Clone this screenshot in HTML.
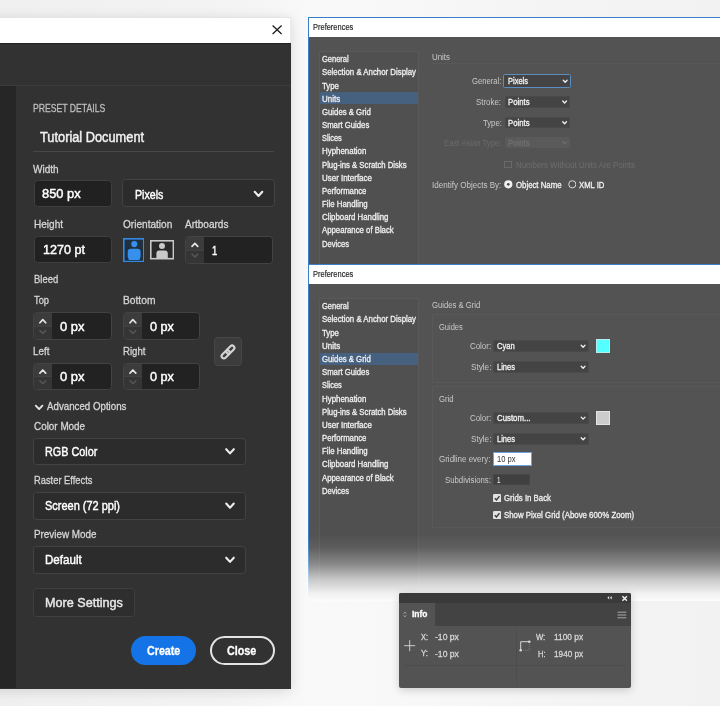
<!DOCTYPE html>
<html><head><meta charset="utf-8"><title>ui</title>
<style>
html,body{margin:0;padding:0}
body{width:720px;height:706px;overflow:hidden;position:relative;background:linear-gradient(90deg,#f0f0f0 0%,#f3f3f3 30%,#f9f9f9 44%,#f8f8f8 55%,#f3f3f3 85%,#f2f2f2 100%);font-family:"Liberation Sans",sans-serif;}
#w{position:absolute;left:0;top:0;width:720px;height:706px;will-change:transform}
.b{position:absolute;box-sizing:border-box;display:block}
.t{position:absolute;white-space:nowrap;line-height:1;transform-origin:0 50%;display:block}
</style></head><body><div id="w">
<div class="b" style="left:-20.0px;top:17.0px;width:311.3px;height:671.5px;background:#323232;box-shadow:0 2px 12px rgba(0,0,0,.13);"></div>
<div class="b" style="left:-20.0px;top:17.0px;width:311.3px;height:26.2px;background:#fff;border-top:1px solid #e4e4e4;border-right:1px solid #ececec;"></div>
<div class="b" style="left:-20.0px;top:43.2px;width:311.3px;height:1.2px;background:#232323;"></div>
<div class="b" style="left:-20.0px;top:85.6px;width:35.8px;height:602.9px;background:#262626;"></div>
<div class="b" style="left:-20.0px;top:84.5px;width:311.3px;height:1.2px;background:#3c3c3c;"></div>
<svg class="b" style="left:270.0px;top:23.0px" width="14" height="14" viewBox="0 0 14 14"><path d="M2.6 2.5 L11.6 11 M11.6 2.5 L2.6 11" stroke="#1a1a1a" stroke-width="1.25" fill="none"/></svg>
<span class="t" style="left:33.4px;top:103.0px;font-size:11px;color:#bebebe;transform:scaleX(0.786);-webkit-text-stroke:0.3px #bebebe;">PRESET DETAILS</span>
<span class="t" style="left:40.4px;top:130.4px;font-size:14px;color:#f2f2f2;transform:scaleX(0.914);-webkit-text-stroke:0.44999999999999996px #f2f2f2;">Tutorial Document</span>
<div class="b" style="left:33.4px;top:151.2px;width:240.6px;height:1.0px;background:#474747;"></div>
<span class="t" style="left:33.4px;top:163.6px;font-size:11px;color:#d6d6d6;transform:scaleX(0.910);-webkit-text-stroke:0.3px #d6d6d6;">Width</span>
<div class="b" style="left:33.8px;top:179.8px;width:78.2px;height:27.6px;background:#212121;border:1.3px solid #3f3f3f;border-radius:3.5px;"></div>
<span class="t" style="left:42.0px;top:187.3px;font-size:13px;color:#fff;transform:scaleX(0.991);-webkit-text-stroke:0.44999999999999996px #fff;">850 px</span>
<div class="b" style="left:122.2px;top:179.4px;width:152.8px;height:28.0px;background:#2c2c2c;border:1.3px solid #434343;border-radius:3.5px;"></div>
<span class="t" style="left:134.7px;top:187.8px;font-size:13px;color:#fff;transform:scaleX(0.816);-webkit-text-stroke:0.44999999999999996px #fff;">Pixels</span>
<svg class="b" style="left:0;top:0" width="720" height="706"><path d="M254.7 191.8 L258.5 196.0 L262.3 191.8" stroke="#ececec" stroke-width="2.1" fill="none" stroke-linecap="round" stroke-linejoin="round"/></svg>
<span class="t" style="left:33.6px;top:219.1px;font-size:11px;color:#d6d6d6;transform:scaleX(0.912);-webkit-text-stroke:0.3px #d6d6d6;">Height</span>
<span class="t" style="left:122.7px;top:219.1px;font-size:11px;color:#d6d6d6;transform:scaleX(0.916);-webkit-text-stroke:0.3px #d6d6d6;">Orientation</span>
<span class="t" style="left:185.2px;top:219.1px;font-size:11px;color:#d6d6d6;transform:scaleX(0.910);-webkit-text-stroke:0.3px #d6d6d6;">Artboards</span>
<div class="b" style="left:33.8px;top:235.8px;width:78.2px;height:27.7px;background:#212121;border:1.3px solid #3f3f3f;border-radius:3.5px;"></div>
<span class="t" style="left:43.3px;top:243.0px;font-size:13px;color:#fff;transform:scaleX(0.968);-webkit-text-stroke:0.44999999999999996px #fff;">1270 pt</span>
<svg class="b" style="left:122.6px;top:237.6px" width="21.6" height="24.4" viewBox="0 0 21.6 24.4"><rect x="0.8" y="0.8" width="20" height="22.8" fill="#20303f" stroke="#3489e6" stroke-width="1.6"/><circle cx="11.3" cy="6.1" r="3.1" fill="#3590ee"/><path d="M5.9 21.9 L4.7 18.5 V14 Q4.7 10.8 7.9 10.8 H14.4 Q17.6 10.8 17.6 14 V18.5 L16.4 21.9 Z" fill="#3590ee"/></svg>
<svg class="b" style="left:150.0px;top:240.2px" width="24.2" height="19.5" viewBox="0 0 24.2 19.5"><rect x="0.8" y="0.8" width="22.6" height="17.9" fill="#2a2a2a" stroke="#c9c9c9" stroke-width="1.6"/><circle cx="12" cy="5.9" r="3" fill="#cacaca"/><path d="M6.4 18.2 V13.4 Q6.4 10.5 9.3 10.5 H14.9 Q17.8 10.5 17.8 13.4 V18.2 Z" fill="#cacaca"/></svg>
<div class="b" style="left:185.3px;top:236.3px;width:88.2px;height:27.3px;background:#222;border:1.2px solid #434343;border-radius:3.5px;"></div>
<div class="b" style="left:186.3px;top:237.3px;width:17.5px;height:25.3px;background:linear-gradient(#3c3c3c 0,#3c3c3c 49%,#424242 49%,#424242 52%,#353535 52%);border-radius:2px 0 0 2px;"></div>
<svg class="b" style="left:0;top:0" width="720" height="706"><path d="M192.0 246.4 L194.9 243.3 L197.8 246.4" stroke="#e4e4e4" stroke-width="1.7" fill="none" stroke-linecap="round" stroke-linejoin="round"/></svg>
<svg class="b" style="left:0;top:0" width="720" height="706"><path d="M192.0 254.1 L194.9 257.0 L197.8 254.1" stroke="#555" stroke-width="1.6" fill="none" stroke-linecap="round" stroke-linejoin="round"/></svg>
<span class="t" style="left:212.3px;top:243.6px;font-size:13px;color:#fff;transform:scaleX(0.719);-webkit-text-stroke:0.44999999999999996px #fff;">1</span>
<span class="t" style="left:34.0px;top:273.7px;font-size:11px;color:#d6d6d6;transform:scaleX(0.860);-webkit-text-stroke:0.3px #d6d6d6;">Bleed</span>
<span class="t" style="left:33.6px;top:295.3px;font-size:11px;color:#d6d6d6;transform:scaleX(0.846);-webkit-text-stroke:0.3px #d6d6d6;">Top</span>
<span class="t" style="left:123.0px;top:295.3px;font-size:11px;color:#d6d6d6;transform:scaleX(0.930);-webkit-text-stroke:0.3px #d6d6d6;">Bottom</span>
<div class="b" style="left:33.3px;top:312.3px;width:78.5px;height:28.0px;background:#222;border:1.2px solid #434343;border-radius:3.5px;"></div>
<div class="b" style="left:34.3px;top:313.3px;width:17.5px;height:26.0px;background:linear-gradient(#3c3c3c 0,#3c3c3c 49%,#424242 49%,#424242 52%,#353535 52%);border-radius:2px 0 0 2px;"></div>
<svg class="b" style="left:0;top:0" width="720" height="706"><path d="M39.9 322.8 L42.8 319.6 L45.7 322.8" stroke="#e4e4e4" stroke-width="1.7" fill="none" stroke-linecap="round" stroke-linejoin="round"/></svg>
<svg class="b" style="left:0;top:0" width="720" height="706"><path d="M39.9 330.5 L42.8 333.4 L45.7 330.5" stroke="#555" stroke-width="1.6" fill="none" stroke-linecap="round" stroke-linejoin="round"/></svg>
<span class="t" style="left:60.0px;top:320.0px;font-size:13px;color:#fff;transform:scaleX(0.997);-webkit-text-stroke:0.44999999999999996px #fff;">0 px</span>
<div class="b" style="left:123.3px;top:312.3px;width:77.2px;height:28.0px;background:#222;border:1.2px solid #434343;border-radius:3.5px;"></div>
<div class="b" style="left:124.3px;top:313.3px;width:17.5px;height:26.0px;background:linear-gradient(#3c3c3c 0,#3c3c3c 49%,#424242 49%,#424242 52%,#353535 52%);border-radius:2px 0 0 2px;"></div>
<svg class="b" style="left:0;top:0" width="720" height="706"><path d="M130.0 322.8 L132.9 319.6 L135.8 322.8" stroke="#e4e4e4" stroke-width="1.7" fill="none" stroke-linecap="round" stroke-linejoin="round"/></svg>
<svg class="b" style="left:0;top:0" width="720" height="706"><path d="M130.0 330.5 L132.9 333.4 L135.8 330.5" stroke="#555" stroke-width="1.6" fill="none" stroke-linecap="round" stroke-linejoin="round"/></svg>
<span class="t" style="left:149.5px;top:320.0px;font-size:13px;color:#fff;transform:scaleX(0.973);-webkit-text-stroke:0.44999999999999996px #fff;">0 px</span>
<span class="t" style="left:33.4px;top:345.8px;font-size:11px;color:#d6d6d6;transform:scaleX(0.894);-webkit-text-stroke:0.3px #d6d6d6;">Left</span>
<span class="t" style="left:122.6px;top:345.8px;font-size:11px;color:#d6d6d6;transform:scaleX(0.876);-webkit-text-stroke:0.3px #d6d6d6;">Right</span>
<div class="b" style="left:33.3px;top:362.8px;width:78.5px;height:27.7px;background:#222;border:1.2px solid #434343;border-radius:3.5px;"></div>
<div class="b" style="left:34.3px;top:363.8px;width:17.5px;height:25.7px;background:linear-gradient(#3c3c3c 0,#3c3c3c 49%,#424242 49%,#424242 52%,#353535 52%);border-radius:2px 0 0 2px;"></div>
<svg class="b" style="left:0;top:0" width="720" height="706"><path d="M39.9 373.1 L42.8 370.0 L45.7 373.1" stroke="#e4e4e4" stroke-width="1.7" fill="none" stroke-linecap="round" stroke-linejoin="round"/></svg>
<svg class="b" style="left:0;top:0" width="720" height="706"><path d="M39.9 380.8 L42.8 383.7 L45.7 380.8" stroke="#555" stroke-width="1.6" fill="none" stroke-linecap="round" stroke-linejoin="round"/></svg>
<span class="t" style="left:60.0px;top:370.3px;font-size:13px;color:#fff;transform:scaleX(0.997);-webkit-text-stroke:0.44999999999999996px #fff;">0 px</span>
<div class="b" style="left:123.3px;top:362.8px;width:77.2px;height:27.7px;background:#222;border:1.2px solid #434343;border-radius:3.5px;"></div>
<div class="b" style="left:124.3px;top:363.8px;width:17.5px;height:25.7px;background:linear-gradient(#3c3c3c 0,#3c3c3c 49%,#424242 49%,#424242 52%,#353535 52%);border-radius:2px 0 0 2px;"></div>
<svg class="b" style="left:0;top:0" width="720" height="706"><path d="M130.0 373.1 L132.9 370.0 L135.8 373.1" stroke="#e4e4e4" stroke-width="1.7" fill="none" stroke-linecap="round" stroke-linejoin="round"/></svg>
<svg class="b" style="left:0;top:0" width="720" height="706"><path d="M130.0 380.8 L132.9 383.7 L135.8 380.8" stroke="#555" stroke-width="1.6" fill="none" stroke-linecap="round" stroke-linejoin="round"/></svg>
<span class="t" style="left:149.5px;top:370.3px;font-size:13px;color:#fff;transform:scaleX(0.973);-webkit-text-stroke:0.44999999999999996px #fff;">0 px</span>
<div class="b" style="left:213.7px;top:336.6px;width:28.8px;height:29.6px;background:#3c3c3c;border:1px solid #474747;border-radius:4px;"></div>
<svg class="b" style="left:218.1px;top:341.5px" width="20" height="20" viewBox="0 0 20 20"><g transform="rotate(-45 10 10)" fill="none" stroke="#d4d4d4" stroke-width="2.1"><rect x="1.9" y="7.7" width="9.6" height="4.6" rx="2.3"/><rect x="8.5" y="7.7" width="9.6" height="4.6" rx="2.3"/></g></svg>
<svg class="b" style="left:0;top:0" width="720" height="706"><path d="M35.8 405.7 L39.1 409.1 L42.4 405.7" stroke="#e4e4e4" stroke-width="1.9" fill="none" stroke-linecap="round" stroke-linejoin="round"/></svg>
<span class="t" style="left:46.8px;top:400.9px;font-size:11px;color:#d6d6d6;transform:scaleX(0.884);-webkit-text-stroke:0.3px #d6d6d6;">Advanced Options</span>
<span class="t" style="left:33.5px;top:420.9px;font-size:11px;color:#d6d6d6;transform:scaleX(0.899);-webkit-text-stroke:0.3px #d6d6d6;">Color Mode</span>
<div class="b" style="left:33.3px;top:437.6px;width:212.7px;height:27.6px;background:#2c2c2c;border:1.3px solid #434343;border-radius:3.5px;"></div>
<span class="t" style="left:45.0px;top:445.0px;font-size:13px;color:#fff;transform:scaleX(0.832);-webkit-text-stroke:0.44999999999999996px #fff;">RGB Color</span>
<svg class="b" style="left:0;top:0" width="720" height="706"><path d="M226.2 449.2 L230.0 453.4 L233.8 449.2" stroke="#ececec" stroke-width="2.1" fill="none" stroke-linecap="round" stroke-linejoin="round"/></svg>
<span class="t" style="left:33.5px;top:474.7px;font-size:11px;color:#d6d6d6;transform:scaleX(0.849);-webkit-text-stroke:0.3px #d6d6d6;">Raster Effects</span>
<div class="b" style="left:33.3px;top:491.5px;width:212.7px;height:28.1px;background:#2c2c2c;border:1.3px solid #434343;border-radius:3.5px;"></div>
<span class="t" style="left:45.0px;top:498.8px;font-size:13px;color:#fff;transform:scaleX(0.844);-webkit-text-stroke:0.44999999999999996px #fff;">Screen (72 ppi)</span>
<svg class="b" style="left:0;top:0" width="720" height="706"><path d="M226.2 503.5 L230.0 507.7 L233.8 503.5" stroke="#ececec" stroke-width="2.1" fill="none" stroke-linecap="round" stroke-linejoin="round"/></svg>
<span class="t" style="left:33.5px;top:529.2px;font-size:11px;color:#d6d6d6;transform:scaleX(0.897);-webkit-text-stroke:0.3px #d6d6d6;">Preview Mode</span>
<div class="b" style="left:33.3px;top:545.8px;width:212.7px;height:27.8px;background:#2c2c2c;border:1.3px solid #434343;border-radius:3.5px;"></div>
<span class="t" style="left:45.0px;top:553.0px;font-size:13px;color:#fff;transform:scaleX(0.891);-webkit-text-stroke:0.44999999999999996px #fff;">Default</span>
<svg class="b" style="left:0;top:0" width="720" height="706"><path d="M226.2 557.7 L230.0 561.9 L233.8 557.7" stroke="#ececec" stroke-width="2.1" fill="none" stroke-linecap="round" stroke-linejoin="round"/></svg>
<div class="b" style="left:33.3px;top:587.9px;width:101.3px;height:28.8px;background:#2e2e2e;border:1.2px solid #404040;border-radius:3.5px;"></div>
<span class="t" style="left:45.0px;top:595.6px;font-size:13.5px;color:#e8e8e8;transform:scaleX(0.935);-webkit-text-stroke:0.44999999999999996px #e8e8e8;">More Settings</span>
<div class="b" style="left:131.3px;top:635.8px;width:65.0px;height:29.2px;background:#1473e6;border-radius:15px;"></div>
<span class="t" style="left:146.7px;top:644.6px;font-size:12.5px;color:#fff;font-weight:bold;transform:scaleX(0.856);-webkit-text-stroke:0.3px #fff;">Create</span>
<div class="b" style="left:209.6px;top:635.8px;width:65.4px;height:29.2px;border:2px solid #e4e4e4;border-radius:15px;box-sizing:border-box;"></div>
<span class="t" style="left:227.0px;top:644.6px;font-size:12.5px;color:#fff;font-weight:bold;transform:scaleX(0.861);-webkit-text-stroke:0.3px #fff;">Close</span>
<div class="b" style="left:308.0px;top:17.0px;width:432.0px;height:283.0px;background:#535353;border:1.2px solid #3b7fc8;border-bottom:none;"></div>
<div class="b" style="left:309.0px;top:18.0px;width:431.0px;height:18.6px;background:#fff;"></div>
<span class="t" style="left:312.9px;top:22.9px;font-size:8.5px;color:#222;transform:scaleX(0.879);-webkit-text-stroke:0.15px #222;">Preferences</span>
<div class="b" style="left:319.3px;top:50.6px;width:99.3px;height:254.4px;background:#505050;border:1px solid #595959;"></div>
<span class="t" style="left:321.5px;top:55.1px;font-size:8.5px;color:#f0f0f0;transform:scaleX(0.883);-webkit-text-stroke:0.3px #f0f0f0;">General</span>
<span class="t" style="left:321.5px;top:68.3px;font-size:8.5px;color:#f0f0f0;transform:scaleX(0.921);-webkit-text-stroke:0.3px #f0f0f0;">Selection &amp; Anchor Display</span>
<span class="t" style="left:321.5px;top:81.5px;font-size:8.5px;color:#f0f0f0;transform:scaleX(0.917);-webkit-text-stroke:0.3px #f0f0f0;">Type</span>
<div class="b" style="left:320.0px;top:92.4px;width:97.5px;height:12.1px;background:#46607f;"></div>
<span class="t" style="left:321.5px;top:94.6px;font-size:8.5px;color:#f0f0f0;transform:scaleX(0.935);-webkit-text-stroke:0.3px #f0f0f0;">Units</span>
<span class="t" style="left:321.5px;top:107.8px;font-size:8.5px;color:#f0f0f0;transform:scaleX(0.914);-webkit-text-stroke:0.3px #f0f0f0;">Guides &amp; Grid</span>
<span class="t" style="left:321.5px;top:121.0px;font-size:8.5px;color:#f0f0f0;transform:scaleX(0.910);-webkit-text-stroke:0.3px #f0f0f0;">Smart Guides</span>
<span class="t" style="left:321.5px;top:134.2px;font-size:8.5px;color:#f0f0f0;transform:scaleX(0.869);-webkit-text-stroke:0.3px #f0f0f0;">Slices</span>
<span class="t" style="left:321.5px;top:147.4px;font-size:8.5px;color:#f0f0f0;transform:scaleX(0.930);-webkit-text-stroke:0.3px #f0f0f0;">Hyphenation</span>
<span class="t" style="left:321.5px;top:160.5px;font-size:8.5px;color:#f0f0f0;transform:scaleX(0.909);-webkit-text-stroke:0.3px #f0f0f0;">Plug-ins &amp; Scratch Disks</span>
<span class="t" style="left:321.5px;top:173.7px;font-size:8.5px;color:#f0f0f0;transform:scaleX(0.935);-webkit-text-stroke:0.3px #f0f0f0;">User Interface</span>
<span class="t" style="left:321.5px;top:186.9px;font-size:8.5px;color:#f0f0f0;transform:scaleX(0.913);-webkit-text-stroke:0.3px #f0f0f0;">Performance</span>
<span class="t" style="left:321.5px;top:200.1px;font-size:8.5px;color:#f0f0f0;transform:scaleX(0.921);-webkit-text-stroke:0.3px #f0f0f0;">File Handling</span>
<span class="t" style="left:321.5px;top:213.3px;font-size:8.5px;color:#f0f0f0;transform:scaleX(0.919);-webkit-text-stroke:0.3px #f0f0f0;">Clipboard Handling</span>
<span class="t" style="left:321.5px;top:226.4px;font-size:8.5px;color:#f0f0f0;transform:scaleX(0.914);-webkit-text-stroke:0.3px #f0f0f0;">Appearance of Black</span>
<span class="t" style="left:321.5px;top:239.6px;font-size:8.5px;color:#f0f0f0;transform:scaleX(0.893);-webkit-text-stroke:0.3px #f0f0f0;">Devices</span>
<span class="t" style="left:432.0px;top:53.4px;font-size:8.5px;color:#c9c9c9;transform:scaleX(0.930);">Units</span>
<div class="b" style="left:432.0px;top:63.0px;width:308.0px;height:1.0px;background:#585858;"></div>
<span class="t" style="left:472.0px;top:77.4px;font-size:8.5px;color:#c9c9c9;transform:scaleX(0.899);">General:</span>
<div class="b" style="left:503.3px;top:74.3px;width:67.5px;height:13.7px;background:#444;border:1px solid #5a8dc2;border-radius:1.5px;"></div>
<span class="t" style="left:508.0px;top:77.2px;font-size:8.5px;color:#f4f4f4;transform:scaleX(0.882);-webkit-text-stroke:0.3px #f4f4f4;">Pixels</span>
<svg class="b" style="left:0;top:0" width="720" height="706"><path d="M563.3 80.2 L565.2 82.2 L567.1 80.2" stroke="#f0f0f0" stroke-width="1.3" fill="none" stroke-linecap="round" stroke-linejoin="round"/></svg>
<span class="t" style="left:476.3px;top:98.0px;font-size:8.5px;color:#c9c9c9;transform:scaleX(0.928);">Stroke:</span>
<div class="b" style="left:504.8px;top:96.3px;width:65.4px;height:11.3px;background:#444;border:1px solid #4a4a4a;border-radius:1.5px;"></div>
<span class="t" style="left:508.0px;top:98.0px;font-size:8.5px;color:#f4f4f4;transform:scaleX(0.910);-webkit-text-stroke:0.3px #f4f4f4;">Points</span>
<svg class="b" style="left:0;top:0" width="720" height="706"><path d="M562.7 101.0 L564.6 103.0 L566.5 101.0" stroke="#f0f0f0" stroke-width="1.3" fill="none" stroke-linecap="round" stroke-linejoin="round"/></svg>
<span class="t" style="left:482.5px;top:118.6px;font-size:8.5px;color:#c9c9c9;transform:scaleX(0.904);">Type:</span>
<div class="b" style="left:504.8px;top:117.0px;width:65.4px;height:11.2px;background:#444;border:1px solid #4a4a4a;border-radius:1.5px;"></div>
<span class="t" style="left:508.0px;top:118.6px;font-size:8.5px;color:#f4f4f4;transform:scaleX(0.910);-webkit-text-stroke:0.3px #f4f4f4;">Points</span>
<svg class="b" style="left:0;top:0" width="720" height="706"><path d="M562.7 121.7 L564.6 123.7 L566.5 121.7" stroke="#f0f0f0" stroke-width="1.3" fill="none" stroke-linecap="round" stroke-linejoin="round"/></svg>
<span class="t" style="left:443.8px;top:138.6px;font-size:8.5px;color:#6b6b6b;transform:scaleX(0.910);">East Asian Type:</span>
<div class="b" style="left:504.8px;top:137.0px;width:65.4px;height:11.2px;background:#5a5a5a;border:1px solid #5a5a5a;border-radius:1.5px;"></div>
<span class="t" style="left:508.0px;top:138.6px;font-size:8.5px;color:#707070;transform:scaleX(0.910);-webkit-text-stroke:0.3px #707070;">Points</span>
<svg class="b" style="left:0;top:0" width="720" height="706"><path d="M562.7 141.7 L564.6 143.7 L566.5 141.7" stroke="#6c6c6c" stroke-width="1.3" fill="none" stroke-linecap="round" stroke-linejoin="round"/></svg>
<div class="b" style="left:504.3px;top:160.5px;width:7.7px;height:7.8px;border:1px solid #6a6a6a;"></div>
<span class="t" style="left:515.5px;top:160.5px;font-size:8.5px;color:#6e6e6e;transform:scaleX(0.926);">Numbers Without Units Are Points</span>
<span class="t" style="left:432.0px;top:180.5px;font-size:8.5px;color:#c9c9c9;transform:scaleX(0.946);">Identify Objects By:</span>
<svg class="b" style="left:504.2px;top:180.2px" width="8.6" height="8.6" viewBox="0 0 8.6 8.6"><circle cx="4.3" cy="4.3" r="4.1" fill="#f0f0f0"/><circle cx="4.3" cy="4.3" r="1.35" fill="#4a4a4a"/></svg>
<span class="t" style="left:515.5px;top:180.5px;font-size:8.5px;color:#f0f0f0;transform:scaleX(0.917);-webkit-text-stroke:0.3px #f0f0f0;">Object Name</span>
<svg class="b" style="left:567.9px;top:180.2px" width="8.6" height="8.6" viewBox="0 0 8.6 8.6"><circle cx="4.3" cy="4.3" r="3.6" fill="#535353" stroke="#dcdcdc" stroke-width="1"/></svg>
<span class="t" style="left:579.3px;top:180.5px;font-size:8.5px;color:#f0f0f0;transform:scaleX(0.906);-webkit-text-stroke:0.3px #f0f0f0;">XML ID</span>
<div class="b" style="left:308.0px;top:264.1px;width:432.0px;height:336.4px;background:#535353;border:1.2px solid #3b7fc8;border-bottom:none;"></div>
<div class="b" style="left:309.0px;top:265.1px;width:431.0px;height:18.6px;background:#fff;"></div>
<span class="t" style="left:312.9px;top:270.0px;font-size:8.5px;color:#222;transform:scaleX(0.879);-webkit-text-stroke:0.15px #222;">Preferences</span>
<div class="b" style="left:319.3px;top:297.7px;width:99.3px;height:302.8px;background:#505050;border:1px solid #595959;"></div>
<span class="t" style="left:321.5px;top:302.2px;font-size:8.5px;color:#f0f0f0;transform:scaleX(0.883);-webkit-text-stroke:0.3px #f0f0f0;">General</span>
<span class="t" style="left:321.5px;top:315.4px;font-size:8.5px;color:#f0f0f0;transform:scaleX(0.921);-webkit-text-stroke:0.3px #f0f0f0;">Selection &amp; Anchor Display</span>
<span class="t" style="left:321.5px;top:328.6px;font-size:8.5px;color:#f0f0f0;transform:scaleX(0.917);-webkit-text-stroke:0.3px #f0f0f0;">Type</span>
<span class="t" style="left:321.5px;top:341.7px;font-size:8.5px;color:#f0f0f0;transform:scaleX(0.935);-webkit-text-stroke:0.3px #f0f0f0;">Units</span>
<div class="b" style="left:320.0px;top:352.7px;width:97.5px;height:12.1px;background:#46607f;"></div>
<span class="t" style="left:321.5px;top:354.9px;font-size:8.5px;color:#f0f0f0;transform:scaleX(0.914);-webkit-text-stroke:0.3px #f0f0f0;">Guides &amp; Grid</span>
<span class="t" style="left:321.5px;top:368.1px;font-size:8.5px;color:#f0f0f0;transform:scaleX(0.910);-webkit-text-stroke:0.3px #f0f0f0;">Smart Guides</span>
<span class="t" style="left:321.5px;top:381.3px;font-size:8.5px;color:#f0f0f0;transform:scaleX(0.869);-webkit-text-stroke:0.3px #f0f0f0;">Slices</span>
<span class="t" style="left:321.5px;top:394.5px;font-size:8.5px;color:#f0f0f0;transform:scaleX(0.930);-webkit-text-stroke:0.3px #f0f0f0;">Hyphenation</span>
<span class="t" style="left:321.5px;top:407.6px;font-size:8.5px;color:#f0f0f0;transform:scaleX(0.909);-webkit-text-stroke:0.3px #f0f0f0;">Plug-ins &amp; Scratch Disks</span>
<span class="t" style="left:321.5px;top:420.8px;font-size:8.5px;color:#f0f0f0;transform:scaleX(0.935);-webkit-text-stroke:0.3px #f0f0f0;">User Interface</span>
<span class="t" style="left:321.5px;top:434.0px;font-size:8.5px;color:#f0f0f0;transform:scaleX(0.913);-webkit-text-stroke:0.3px #f0f0f0;">Performance</span>
<span class="t" style="left:321.5px;top:447.2px;font-size:8.5px;color:#f0f0f0;transform:scaleX(0.921);-webkit-text-stroke:0.3px #f0f0f0;">File Handling</span>
<span class="t" style="left:321.5px;top:460.4px;font-size:8.5px;color:#f0f0f0;transform:scaleX(0.919);-webkit-text-stroke:0.3px #f0f0f0;">Clipboard Handling</span>
<span class="t" style="left:321.5px;top:473.5px;font-size:8.5px;color:#f0f0f0;transform:scaleX(0.914);-webkit-text-stroke:0.3px #f0f0f0;">Appearance of Black</span>
<span class="t" style="left:321.5px;top:486.7px;font-size:8.5px;color:#f0f0f0;transform:scaleX(0.893);-webkit-text-stroke:0.3px #f0f0f0;">Devices</span>
<span class="t" style="left:432.2px;top:301.1px;font-size:8.5px;color:#c9c9c9;transform:scaleX(0.905);">Guides &amp; Grid</span>
<div class="b" style="left:432.3px;top:313.8px;width:307.7px;height:69.4px;border:1px solid #595959;border-right:none;"></div>
<span class="t" style="left:439.0px;top:323.2px;font-size:8.5px;color:#c9c9c9;transform:scaleX(0.884);">Guides</span>
<span class="t" style="left:469.8px;top:342.4px;font-size:8.5px;color:#c9c9c9;transform:scaleX(0.931);">Color:</span>
<div class="b" style="left:493.3px;top:340.4px;width:95.4px;height:11.6px;background:#444;border:1px solid #4a4a4a;border-radius:1.5px;"></div>
<span class="t" style="left:497.0px;top:342.2px;font-size:8.5px;color:#f4f4f4;transform:scaleX(0.892);-webkit-text-stroke:0.3px #f4f4f4;">Cyan</span>
<svg class="b" style="left:0;top:0" width="720" height="706"><path d="M581.2 345.3 L583.1 347.3 L585.0 345.3" stroke="#f0f0f0" stroke-width="1.3" fill="none" stroke-linecap="round" stroke-linejoin="round"/></svg>
<div class="b" style="left:596.0px;top:338.9px;width:14.3px;height:14.3px;background:#55ffff;border:1px solid #b4ecec;"></div>
<span class="t" style="left:470.5px;top:363.0px;font-size:8.5px;color:#c9c9c9;transform:scaleX(0.960);">Style:</span>
<div class="b" style="left:493.3px;top:361.2px;width:95.4px;height:11.9px;background:#444;border:1px solid #4a4a4a;border-radius:1.5px;"></div>
<span class="t" style="left:497.0px;top:363.2px;font-size:8.5px;color:#f4f4f4;transform:scaleX(0.886);-webkit-text-stroke:0.3px #f4f4f4;">Lines</span>
<svg class="b" style="left:0;top:0" width="720" height="706"><path d="M581.2 366.2 L583.1 368.2 L585.0 366.2" stroke="#f0f0f0" stroke-width="1.3" fill="none" stroke-linecap="round" stroke-linejoin="round"/></svg>
<div class="b" style="left:432.3px;top:386.0px;width:307.7px;height:142.3px;border:1px solid #595959;border-right:none;"></div>
<span class="t" style="left:439.0px;top:394.9px;font-size:8.5px;color:#c9c9c9;transform:scaleX(0.909);">Grid</span>
<span class="t" style="left:469.8px;top:414.0px;font-size:8.5px;color:#c9c9c9;transform:scaleX(0.931);">Color:</span>
<div class="b" style="left:493.3px;top:412.2px;width:95.4px;height:11.6px;background:#444;border:1px solid #4a4a4a;border-radius:1.5px;"></div>
<span class="t" style="left:497.0px;top:414.0px;font-size:8.5px;color:#f4f4f4;transform:scaleX(0.921);-webkit-text-stroke:0.3px #f4f4f4;">Custom...</span>
<svg class="b" style="left:0;top:0" width="720" height="706"><path d="M581.2 417.1 L583.1 419.1 L585.0 417.1" stroke="#f0f0f0" stroke-width="1.3" fill="none" stroke-linecap="round" stroke-linejoin="round"/></svg>
<div class="b" style="left:596.0px;top:410.7px;width:14.3px;height:14.6px;background:#cccccc;border:1px solid #e4e4e4;"></div>
<span class="t" style="left:470.5px;top:435.0px;font-size:8.5px;color:#c9c9c9;transform:scaleX(0.960);">Style:</span>
<div class="b" style="left:493.3px;top:432.6px;width:95.4px;height:12.0px;background:#444;border:1px solid #4a4a4a;border-radius:1.5px;"></div>
<span class="t" style="left:497.0px;top:434.6px;font-size:8.5px;color:#f4f4f4;transform:scaleX(0.886);-webkit-text-stroke:0.3px #f4f4f4;">Lines</span>
<svg class="b" style="left:0;top:0" width="720" height="706"><path d="M581.2 437.7 L583.1 439.7 L585.0 437.7" stroke="#f0f0f0" stroke-width="1.3" fill="none" stroke-linecap="round" stroke-linejoin="round"/></svg>
<span class="t" style="left:439.0px;top:455.0px;font-size:8.5px;color:#c9c9c9;transform:scaleX(0.938);">Gridline every:</span>
<div class="b" style="left:492.5px;top:451.8px;width:39.3px;height:14.5px;background:#fff;border:1px solid #6aa5df;"></div>
<span class="t" style="left:497.0px;top:455.2px;font-size:8.5px;color:#333;transform:scaleX(0.890);">10 px</span>
<span class="t" style="left:444.6px;top:475.6px;font-size:8.5px;color:#c9c9c9;transform:scaleX(0.915);">Subdivisions:</span>
<div class="b" style="left:492.6px;top:473.8px;width:37.8px;height:11.7px;background:#404040;border:1px solid #474747;"></div>
<span class="t" style="left:497.0px;top:475.6px;font-size:8.5px;color:#f0f0f0;transform:scaleX(0.740);">1</span>
<svg class="b" style="left:493.2px;top:493.8px" width="8.2" height="8.2" viewBox="0 0 8.2 8.2"><rect x="0" y="0" width="8.2" height="8.2" rx="1.2" fill="#e2e2e2"/><path d="M1.8 4.2 L3.5 6 L6.5 2.1" stroke="#3a3a3a" stroke-width="1.4" fill="none"/></svg>
<span class="t" style="left:504.1px;top:493.6px;font-size:8.5px;color:#f0f0f0;transform:scaleX(0.921);-webkit-text-stroke:0.3px #f0f0f0;">Grids In Back</span>
<svg class="b" style="left:493.2px;top:510.9px" width="8.2" height="8.2" viewBox="0 0 8.2 8.2"><rect x="0" y="0" width="8.2" height="8.2" rx="1.2" fill="#e2e2e2"/><path d="M1.8 4.2 L3.5 6 L6.5 2.1" stroke="#3a3a3a" stroke-width="1.4" fill="none"/></svg>
<span class="t" style="left:504.1px;top:510.6px;font-size:8.5px;color:#f0f0f0;transform:scaleX(0.924);-webkit-text-stroke:0.3px #f0f0f0;">Show Pixel Grid (Above 600% Zoom)</span>
<div class="b" style="left:307.0px;top:533.5px;width:413.0px;height:67.0px;background:linear-gradient(rgba(251,251,251,0) 0%,rgba(251,251,251,.07) 20%,rgba(251,251,251,.33) 45%,rgba(251,251,251,.70) 68%,rgba(251,251,251,.94) 89%,#fbfbfb 100%);"></div>
<div class="b" style="left:398.6px;top:592.7px;width:232.1px;height:95.8px;background:#535353;border-radius:2px;box-shadow:0 2px 8px rgba(0,0,0,.18);"></div>
<div class="b" style="left:398.6px;top:592.7px;width:232.1px;height:10.3px;background:#3a3a3a;border-radius:2px 2px 0 0;"></div>
<div class="b" style="left:398.6px;top:603.0px;width:232.1px;height:23.0px;background:#434343;"></div>
<div class="b" style="left:398.6px;top:603.0px;width:36.2px;height:23.0px;background:#535353;"></div>
<span class="t" style="left:411.5px;top:610.3px;font-size:9px;color:#fff;font-weight:bold;transform:scaleX(0.940);-webkit-text-stroke:0.3px #fff;">Info</span>
<svg class="b" style="left:402.8px;top:611.3px" width="4" height="7" viewBox="0 0 4 7"><path d="M0.6 2.6 L1.9 1.2 L3.2 2.6 M0.6 4.4 L1.9 5.8 L3.2 4.4" stroke="#c4c4c4" stroke-width="0.8" fill="none"/></svg>
<svg class="b" style="left:606.5px;top:595.2px" width="6" height="6" viewBox="0 0 6 6"><path d="M0.3 2.7 L2.2 1 V4.4 Z M2.9 2.7 L4.8 1 V4.4 Z" fill="#dadada"/></svg>
<svg class="b" style="left:620.5px;top:594.8px" width="8" height="8" viewBox="0 0 8 8"><path d="M1.4 1.3 L5.9 5.8 M5.9 1.3 L1.4 5.8" stroke="#f0f0f0" stroke-width="1.5" fill="none"/></svg>
<svg class="b" style="left:616.5px;top:611.0px" width="10" height="8" viewBox="0 0 10 8"><path d="M0.5 1.2 H9.3 M0.5 4 H9.3 M0.5 6.8 H9.3" stroke="#a8a8a8" stroke-width="1" fill="none"/></svg>
<span class="t" style="left:420.5px;top:632.7px;font-size:9px;color:#d6d6d6;transform:scaleX(0.823);-webkit-text-stroke:0.3px #d6d6d6;">X:</span>
<span class="t" style="left:435.1px;top:632.9px;font-size:9px;color:#d6d6d6;transform:scaleX(0.955);-webkit-text-stroke:0.3px #d6d6d6;">-10 px</span>
<span class="t" style="left:420.5px;top:649.4px;font-size:9px;color:#d6d6d6;transform:scaleX(0.874);-webkit-text-stroke:0.3px #d6d6d6;">Y:</span>
<span class="t" style="left:435.1px;top:649.6px;font-size:9px;color:#d6d6d6;transform:scaleX(0.955);-webkit-text-stroke:0.3px #d6d6d6;">-10 px</span>
<svg class="b" style="left:404.0px;top:640.0px" width="12" height="12" viewBox="0 0 12 12"><path d="M5.7 0.2 V11.2 M0.2 5.7 H11.2" stroke="#d6d6d6" stroke-width="0.9" fill="none"/></svg>
<div class="b" style="left:516.0px;top:630.0px;width:1.0px;height:56.0px;background:#4d4d4d;"></div>
<div class="b" style="left:404.0px;top:665.3px;width:221.0px;height:1.0px;background:#4c4c4c;"></div>
<svg class="b" style="left:518.5px;top:639.5px" width="12" height="12" viewBox="0 0 12 12"><path d="M1.7 10.3 V1.7 H10.3" stroke="#d6d6d6" stroke-width="1" fill="none"/><path d="M10.3 4 V10.3 H4" stroke="#8a8a8a" stroke-width="0.8" fill="none" stroke-dasharray="1 1"/><circle cx="10.3" cy="1.7" r="1.25" fill="#dcdcdc"/><circle cx="1.7" cy="10.3" r="1.25" fill="#dcdcdc"/></svg>
<span class="t" style="left:536.3px;top:633.1px;font-size:9px;color:#d6d6d6;transform:scaleX(0.849);-webkit-text-stroke:0.3px #d6d6d6;">W:</span>
<span class="t" style="left:553.8px;top:633.3px;font-size:9px;color:#d6d6d6;transform:scaleX(0.931);-webkit-text-stroke:0.3px #d6d6d6;">1100 px</span>
<span class="t" style="left:538.0px;top:650.1px;font-size:9px;color:#d6d6d6;transform:scaleX(0.833);-webkit-text-stroke:0.3px #d6d6d6;">H:</span>
<span class="t" style="left:553.8px;top:650.3px;font-size:9px;color:#d6d6d6;transform:scaleX(0.912);-webkit-text-stroke:0.3px #d6d6d6;">1940 px</span>
</div></body></html>
